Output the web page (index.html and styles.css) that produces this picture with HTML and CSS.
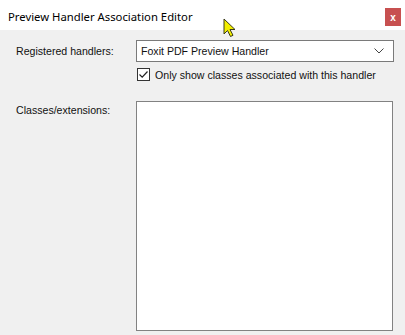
FILE: index.html
```html
<!DOCTYPE html>
<html>
<head>
  <title>Preview Handler Association Editor</title>
<link rel="stylesheet" href="styles.css">
</head>
<body>
<div class="window">
  <div class="titlebar">
    <span class="title">Preview Handler Association Editor</span>
    <span class="close">x</span>
  </div>

  <div class="content">
    <div class="row">
      <div class="lbl">Registered handlers:</div>
      <div class="combo">
        <span>Foxit PDF Preview Handler</span>
        <svg class="arrow" width="10" height="6" viewBox="0 0 10 6">
          <path d="M0.5 0.5 L5 5 L9.5 0.5" fill="none" stroke="#444" stroke-width="1"/>
        </svg>
      </div>
    </div>

    <div class="check-row">
      <div class="check">
        <svg width="11" height="11" viewBox="0 0 11 11">
          <path d="M1.5 5.5 L4.2 8.2 L9.5 2.5" fill="none" stroke="#222" stroke-width="1.2"/>
        </svg>
      </div>
      <span>Only show classes associated with this handler</span>
    </div>

    <div class="row list-row">
      <div class="lbl">Classes/extensions:</div>
      <div class="listbox"></div>
    </div>
  </div>

  <!-- mouse pointer caught in the screenshot -->
  <svg class="cursor" width="14" height="20" viewBox="0 0 14 20">
    <path d="M1 1 L1 16 L4.5 12.5 L7.5 18.5 L10 17.3 L7 11.5 L12 11.5 Z" fill="#f2ee00" stroke="#3a3a1a" stroke-width="1"/>
  </svg>
</div>
</body>
</html>
```

FILE: styles.css
```css
body {
  margin: 0;
  font-family: "Liberation Sans", Arial, sans-serif;
  font-size: 10.6px;
  color: #111;
}

.window {
  position: relative;
  width: 405px;
  height: 335px;
  background-color: #f0f0f0;
  overflow: hidden;
}

.titlebar {
  display: flex;
  align-items: center;
  justify-content: space-between;
  height: 30px;
  background-color: #fff;
  padding: 0 4px 0 8px;
  box-sizing: border-box;
}
.title {
  font-family: "Noto Sans", sans-serif;
  font-size: 11.3px;
  color: #000;
  margin-top: 2px;
}
.close {
  width: 16px;
  height: 18px;
  margin-top: 4px;
  background-color: #c75050;
  color: #fff;
  font-size: 10px;
  font-weight: bold;
  display: flex;
  align-items: center;
  justify-content: center;
}

.content {
  padding: 10px 0 0 16px;
}

.row {
  display: flex;
  align-items: center;
}
.lbl {
  width: 120px;
}

.combo {
  display: flex;
  align-items: center;
  justify-content: space-between;
  width: 258px;
  height: 22px;
  box-sizing: border-box;
  border: 1px solid #7a7a7a;
  background-color: #fff;
  padding: 0 9px 0 4px;
}

.check-row {
  display: flex;
  align-items: center;
  margin: 6px 0 0 121px;
  gap: 5px;
}
.check {
  width: 13px;
  height: 13px;
  box-sizing: border-box;
  border: 1px solid #333;
  background-color: #fff;
  display: flex;
  align-items: center;
  justify-content: center;
}

.list-row {
  align-items: flex-start;
  margin-top: 20px;
}
.list-row .lbl {
  padding-top: 3px;
}
.listbox {
  width: 257px;
  height: 230px;
  box-sizing: border-box;
  border: 1px solid #828282;
  background-color: #fff;
}

.cursor {
  position: absolute;
  left: 223px;
  top: 18px;
}
```
